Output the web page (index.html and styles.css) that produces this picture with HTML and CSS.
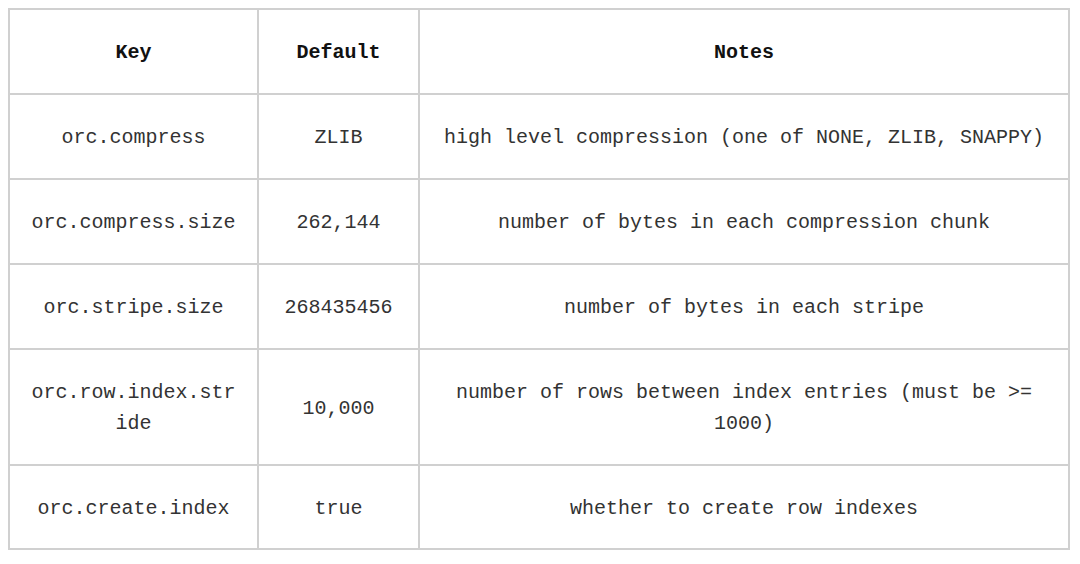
FILE: index.html
```html
<!DOCTYPE html>
<html lang="en">
<head>
<meta charset="utf-8">
<title>ORC configuration</title>
<link rel="stylesheet" href="styles.css">
</head>
<body>
<div class="wrap">
  <table class="conf">
    <thead>
      <tr>
        <th class="c-key">Key</th>
        <th class="c-def">Default</th>
        <th class="c-notes">Notes</th>
      </tr>
    </thead>
    <tbody>
      <tr>
        <td class="c-key">orc.compress</td>
        <td class="c-def">ZLIB</td>
        <td class="c-notes">high level compression (one of NONE, ZLIB, SNAPPY)</td>
      </tr>
      <tr>
        <td class="c-key">orc.compress.size</td>
        <td class="c-def">262,144</td>
        <td class="c-notes">number of bytes in each compression chunk</td>
      </tr>
      <tr>
        <td class="c-key">orc.stripe.size</td>
        <td class="c-def">268435456</td>
        <td class="c-notes">number of bytes in each stripe</td>
      </tr>
      <tr>
        <td class="c-key">orc.row.index.stride</td>
        <td class="c-def">10,000</td>
        <td class="c-notes">number of rows between index entries (must be &gt;= 1000)</td>
      </tr>
      <tr class="last">
        <td class="c-key">orc.create.index</td>
        <td class="c-def">true</td>
        <td class="c-notes">whether to create row indexes</td>
      </tr>
    </tbody>
  </table>
</div>
</body>
</html>
```

FILE: styles.css
```css
html, body {
  margin: 0;
  padding: 0;
  background: #ffffff;
}

.wrap {
  padding: 8px 0 0 8px;
}

.conf {
  border-collapse: separate;
  border-spacing: 0;
  table-layout: fixed;
  width: 1062px;
  border-top: 2px solid #d0d0d0;
  border-left: 2px solid #d0d0d0;
  font-family: "Courier New", "Nimbus Mono PS", "Nimbus Mono L", "FreeMono", "Liberation Mono", monospace;
  font-size: 20px;
  line-height: 31px;
  color: #333333;
}

.conf th,
.conf td {
  box-sizing: border-box;
  border-right: 2px solid #d0d0d0;
  border-bottom: 2px solid #d0d0d0;
  padding: 27px 18px 25px;
  text-align: center;
  vertical-align: middle;
}

.conf th {
  font-weight: bold;
  color: #111111;
}

.conf .last td {
  padding-bottom: 24px;
}

.c-key {
  width: 249px;
  word-break: break-all;
}

.c-def {
  width: 161px;
}

.c-notes {
  width: 650px;
}
```
